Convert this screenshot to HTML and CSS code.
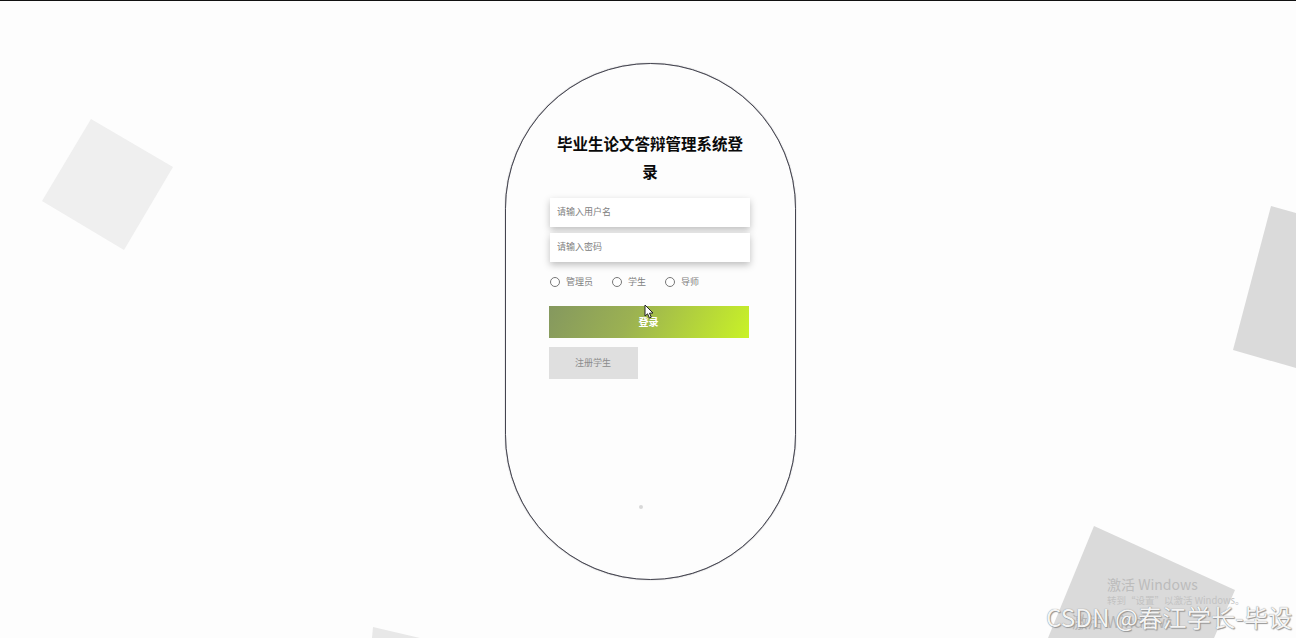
FILE: index.html
```html
<!DOCTYPE html>
<html lang="zh-CN">
<head>
<meta charset="utf-8">
<title>毕业生论文答辩管理系统登录</title>
<link rel="stylesheet" href="styles.css">
</head>
<body>
<svg class="shapes" width="1296" height="638" viewBox="0 0 1296 638" aria-hidden="true">
  <polygon class="shape-light" points="91,119 173,167 124,250 42,201"/>
  <polygon class="shape-mid" points="1271,206 1296,213 1296,368 1233,350"/>
  <polygon class="shape-mid" points="1094,526 1235,590 1214,638 1048,638"/>
  <polygon class="shape-faint" points="373,627 420,638 372,638"/>
</svg>
<main class="capsule">
  <h1 class="title">毕业生论文答辩管理系统登录</h1>
  <form class="form">
    <input class="field" type="text" placeholder="请输入用户名">
    <input class="field" type="password" placeholder="请输入密码">
    <div class="roles">
      <label class="role role-admin"><input class="radio" type="radio" name="role"><span>管理员</span></label>
      <label class="role role-student"><input class="radio" type="radio" name="role"><span>学生</span></label>
      <label class="role"><input class="radio" type="radio" name="role"><span>导师</span></label>
    </div>
    <button class="btn-login" type="button">登录</button>
    <button class="btn-register" type="button">注册学生</button>
  </form>
  <span class="dot"></span>
</main>
<svg class="cursor" width="11" height="16" viewBox="0 0 11 16" aria-hidden="true">
  <path d="M1 1 L1 12 L3.6 9.8 L5.4 14 L7.3 13.2 L5.5 9.2 L9 9 Z" fill="#fff" stroke="#222" stroke-width="1"/>
</svg>
<div class="activate">
  <div class="activate-title">激活 Windows</div>
  <div class="activate-sub">转到“设置”以激活 Windows。</div>
</div>
<div class="activate-ghost">激活 Windows</div>
<div class="watermark">CSDN @春江学长-毕设</div>
</body>
</html>
```
FILE: styles.css
```css
* { box-sizing: border-box; }
html, body { margin: 0; height: 638px; overflow: hidden; }
body {
  position: relative;
  width: 1296px;
  background: #fdfdfd;
  border-top: 1px solid #111;
  font-family: "Noto Sans CJK SC", "Liberation Sans", sans-serif;
  display: flex;
  justify-content: center;
  padding-left: 5px;
}
.shapes { position: absolute; left: 0; top: -1px; }
.shape-light { fill: #efefef; }
.shape-mid { fill: #dadada; }
.shape-faint { fill: #e8e8e8; }
.capsule {
  position: relative;
  width: 291px;
  height: 517px;
  margin-top: 62px;
  padding: 65px 44px 0 44px;
  background: #fdfdfd;
  border: 1px solid #44444f;
  border-radius: 146px;
  box-shadow: 0 0 1px rgba(50, 50, 60, .7);
}
.title {
  width: 200px;
  margin: 0 0 13px;
  font-size: 15.5px;
  line-height: 28px;
  font-weight: 700;
  color: #0a0a0a;
  text-align: center;
}
.form { display: flex; flex-direction: column; align-items: flex-start; width: 201px; }
.field {
  width: 200px;
  height: 29px;
  margin: 0 0 6px;
  padding: 0 7px 2px;
  border: 0;
  outline: 0;
  background: #fff;
  box-shadow: 0 3px 7px rgba(0, 0, 0, .25);
  font: 9px "Noto Sans CJK SC", sans-serif;
}
.field::placeholder { color: #808080; opacity: 1; }
.roles { display: flex; align-items: center; height: 18px; margin-top: 5px; }
.role { display: flex; align-items: center; gap: 6px; font-size: 9px; line-height: 12px; color: #808080; }
.role span { margin-bottom: 1px; }
.role-admin { width: 62px; }
.role-student { width: 53px; }
.radio {
  appearance: none;
  width: 10px;
  height: 10px;
  margin: 0;
  border: 1px solid #777;
  border-radius: 50%;
  background: #fff;
}
.btn-login {
  width: 200px;
  height: 32px;
  margin: 15px 0 0 -1.5px;
  padding: 0 0 2px;
  border: 0;
  background: linear-gradient(115deg, #85985f 0%, #9bb152 40%, #c9f227 100%);
  color: #fff;
  font: 700 10px "Noto Sans CJK SC", sans-serif;
}
.btn-register {
  width: 89px;
  height: 32px;
  margin: 9px 0 0 -1.5px;
  padding: 0 0 2px;
  border: 0;
  background: #dfdfdf;
  color: #8c8c8c;
  font: 9px "Noto Sans CJK SC", sans-serif;
}
.dot {
  position: absolute;
  left: 133px;
  top: 441px;
  width: 4px;
  height: 4px;
  border-radius: 50%;
  background: #d8d8d8;
}
.cursor { position: absolute; left: 644px; top: 303px; }
.activate { position: absolute; left: 1107px; top: 574px; color: #bcbcbc; }
.activate-title { font-size: 14px; line-height: 18px; }
.activate-sub { font-size: 9.5px; line-height: 14px; color: #c2c2c2; }
.activate-ghost { position: absolute; left: 1072px; top: 610px; font-size: 15.5px; line-height: 20px; color: #b4b4b4; }
.watermark {
  position: absolute;
  left: 1046px;
  top: 600px;
  font-size: 24.3px;
  line-height: 32px;
  color: #f4f4f4;
  white-space: nowrap;
  text-shadow: 0 0 1px #777, 1px 1px 1px #999;
}
```
